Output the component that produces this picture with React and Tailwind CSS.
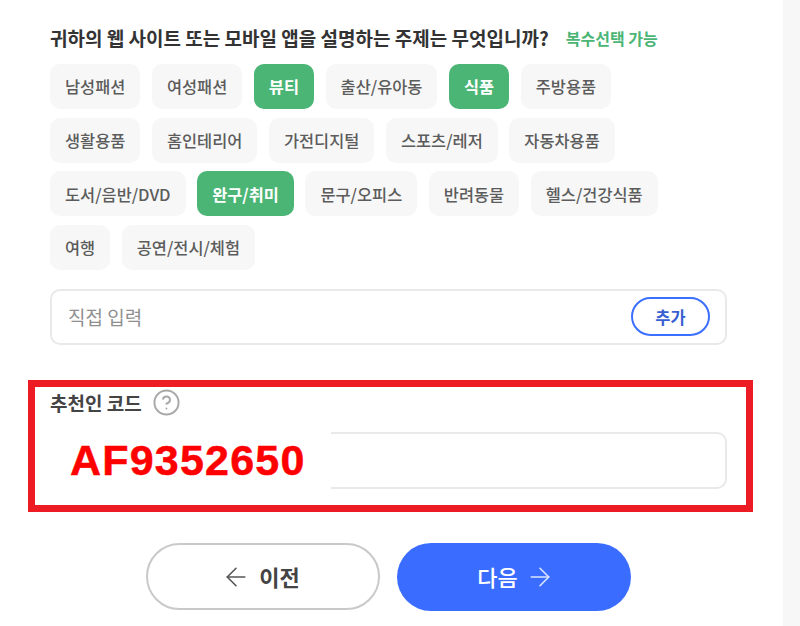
import React from 'react';
import { ArrowLeft, ArrowRight, CircleHelp } from 'lucide-react';

const TOPICS = [
  { label: '남성패션' },
  { label: '여성패션' },
  { label: '뷰티', selected: true },
  { label: '출산/유아동' },
  { label: '식품', selected: true },
  { label: '주방용품' },
  { label: '생활용품' },
  { label: '홈인테리어' },
  { label: '가전디지털' },
  { label: '스포츠/레저' },
  { label: '자동차용품' },
  { label: '도서/음반/DVD' },
  { label: '완구/취미', selected: true },
  { label: '문구/오피스' },
  { label: '반려동물' },
  { label: '헬스/건강식품' },
  { label: '여행' },
  { label: '공연/전시/체험' },
];

function TopicChip({ label, selected }) {
  return (
    <button
      type="button"
      className={
        selected
          ? 'h-[45px] px-[15px] rounded-[10px] bg-[#4bb575] text-[16.4px] font-bold text-white whitespace-nowrap'
          : 'h-[45px] px-[15px] rounded-[10px] bg-[#f7f7f7] text-[16.4px] font-medium text-[#5c5c5c] whitespace-nowrap'
      }
    >
      {label}
    </button>
  );
}

function App() {
  return (
    <div className="flex w-[800px] h-[626px] overflow-hidden bg-white font-['Noto_Sans_CJK_KR','Noto_Sans',sans-serif]">
      <main className="w-[783px] pl-[50px] pr-[56px] pt-[26px]">
        <div className="flex items-center h-[24px]">
          <h2 className="text-[19px] font-bold text-[#333] whitespace-nowrap">
            귀하의 웹 사이트 또는 모바일 앱을 설명하는 주제는 무엇입니까?
          </h2>
          <span className="ml-[17px] text-[16px] font-bold text-[#4bb575] whitespace-nowrap">복수선택 가능</span>
        </div>

        <div className="mt-[14px] w-[640px] flex flex-wrap gap-x-[11.6px] gap-y-[8.67px]">
          {TOPICS.map((topic) => (
            <TopicChip key={topic.label} label={topic.label} selected={topic.selected} />
          ))}
        </div>

        <div className="mt-[19px] h-[56px] flex items-center justify-between pl-[16px] pr-[15px] border-2 border-[#e9e9e9] rounded-[10px]">
          <span className="text-[19px] text-[#8f8f8f]">직접 입력</span>
          <button
            type="button"
            className="w-[79px] h-[39px] rounded-full border-2 border-[#3b6fff] text-[16.5px] font-bold text-[#3a5fd0]"
          >
            추가
          </button>
        </div>

        <section className="relative mt-[46px]">
          <div className="absolute left-[-22px] top-[-11px] w-[725px] h-[132px] border-[7px] border-[#ed1c24] pointer-events-none" />
          <div className="flex items-center h-[24px] gap-[10px]">
            <span className="text-[19px] font-bold text-[#444]">추천인 코드</span>
            <CircleHelp className="h-[29px] w-[29px] text-[#a8a8a8]" strokeWidth={1.6} />
          </div>
          <div className="relative mt-[17px] h-[57px] border-2 border-[#e9e9e9] rounded-[10px]">
            <div className="absolute left-[-2px] top-[-2px] w-[281px] h-[57px] flex items-center pl-[20px] bg-white">
              <span className="font-['Liberation_Sans',sans-serif] text-[43px] font-bold leading-none tracking-[1.2px] text-[#ff0000] [-webkit-text-stroke:0.5px_#ff0000]">
                AF9352650
              </span>
            </div>
          </div>
        </section>

        <div className="mt-[54px] ml-[96px] flex items-center gap-[17px]">
          <button
            type="button"
            className="w-[234px] h-[67px] flex items-center justify-center gap-[8px] pr-[5px] rounded-full border-2 border-[#c9c9c9] bg-white text-[22px] font-bold text-[#444]"
          >
            <ArrowLeft className="h-[30px] w-[30px] text-[#555]" strokeWidth={1.3} />
            이전
          </button>
          <button
            type="button"
            className="w-[234px] h-[68px] flex items-center justify-center gap-[7px] pl-[4px] rounded-full bg-[#3a6dff] text-[22px] font-medium text-white"
          >
            다음
            <ArrowRight className="h-[30px] w-[30px] text-[#dbe5ff]" strokeWidth={1.3} />
          </button>
        </div>
      </main>
      <aside className="flex-1 bg-[#f7f7f7]" />
    </div>
  );
}

export default App;
